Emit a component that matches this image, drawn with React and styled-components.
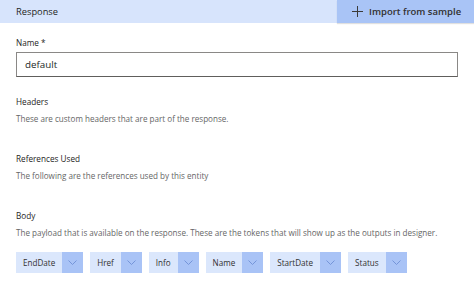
import styled, { createGlobalStyle } from "styled-components";

const GlobalStyle = createGlobalStyle`
  html, body {
    margin: 0;
    padding: 0;
    background: #ffffff;
  }
  body {
    font-family: "Open Sans", "Noto Sans", sans-serif;
    color: #323130;
  }
`;

const tokens = ["EndDate", "Href", "Info", "Name", "StartDate", "Status"];

function Chevron() {
  return (
    <svg width="9" height="5" viewBox="0 0 9 5" fill="none">
      <path d="M0.5 0.5 L4.5 4.5 L8.5 0.5" stroke="#6f90d6" strokeWidth="0.9" />
    </svg>
  );
}

function Plus() {
  return (
    <svg width="11" height="11" viewBox="0 0 11 11" fill="none">
      <path d="M5.5 0 V11 M0 5.5 H11" stroke="#3b3a39" strokeWidth="1" />
    </svg>
  );
}

export default function App() {
  return (
    <>
      <GlobalStyle />
      <Styled.Page>
        <Styled.Header>
          <Styled.HeaderTitle>Response</Styled.HeaderTitle>
          <Styled.ImportButton>
            <Plus />
            Import from sample
          </Styled.ImportButton>
        </Styled.Header>

        <Styled.Content>
          <Styled.Field>
            <Styled.Label>Name *</Styled.Label>
            <Styled.Input>default</Styled.Input>
          </Styled.Field>

          <Styled.Section $top={19}>
            <Styled.Label>Headers</Styled.Label>
            <Styled.Desc>These are custom headers that are part of the response.</Styled.Desc>
          </Styled.Section>

          <Styled.Section $top={28}>
            <Styled.Label>References Used</Styled.Label>
            <Styled.Desc>The following are the references used by this entity</Styled.Desc>
          </Styled.Section>

          <Styled.Section $top={28}>
            <Styled.Label>Body</Styled.Label>
            <Styled.Desc>
              The payload that is available on the response. These are the tokens that will show up as the outputs in designer.
            </Styled.Desc>
            <Styled.Tokens>
              {tokens.map((t) => (
                <Styled.Token key={t}>
                  <Styled.TokenText>{t}</Styled.TokenText>
                  <Styled.TokenChevron>
                    <Chevron />
                  </Styled.TokenChevron>
                </Styled.Token>
              ))}
            </Styled.Tokens>
          </Styled.Section>
        </Styled.Content>
      </Styled.Page>
    </>
  );
}

const Styled = {
  Page: styled.div`
    width: 474px;
    height: 296px;
    overflow: hidden;
  `,

  Header: styled.div`
    display: flex;
    align-items: stretch;
    justify-content: space-between;
    height: 23px;
    background: #d7e4fc;
  `,

  HeaderTitle: styled.div`
    padding-left: 16px;
    display: flex;
    align-items: center;
    font-size: 9.3px;
    color: #252423;
  `,

  ImportButton: styled.div`
    width: 137px;
    display: flex;
    align-items: center;
    gap: 6px;
    padding-left: 15px;
    box-sizing: border-box;
    background: #a9c4f6;
    font-size: 9.5px;
    font-weight: 600;
    color: #323130;
    box-shadow: 0 1px 1px rgba(0, 0, 0, 0.12);
  `,

  Content: styled.div`
    padding: 14px 16px 0;
  `,

  Field: styled.div`
    display: flex;
    flex-direction: column;
    gap: 3px;
  `,

  Section: styled.div`
    margin-top: ${({ $top }) => $top}px;
    display: flex;
    flex-direction: column;
  `,

  Label: styled.div`
    font-size: 8.2px;
    line-height: 12px;
    color: #252423;
  `,

  Desc: styled.div`
    margin-top: 5px;
    font-size: 8.1px;
    line-height: 12px;
    color: #666666;
    white-space: nowrap;
  `,

  Input: styled.div`
    width: 442px;
    height: 25px;
    box-sizing: border-box;
    border: 1px solid #8a8886;
    border-bottom-color: #605e5c;
    display: flex;
    align-items: center;
    padding-left: 8px;
    font-size: 9.8px;
    font-weight: 500;
    color: #201f1e;
  `,

  Tokens: styled.div`
    margin-top: 13px;
    display: flex;
    gap: 7px;
  `,

  Token: styled.div`
    display: flex;
    height: 21px;
    background: #dbe7fc;
  `,

  TokenText: styled.div`
    display: flex;
    align-items: center;
    padding: 0 7px 0 7px;
    font-size: 8.1px;
    color: #323130;
  `,

  TokenChevron: styled.div`
    width: 21px;
    display: flex;
    align-items: center;
    justify-content: center;
    background: #a9c3f6;
  `,
};
